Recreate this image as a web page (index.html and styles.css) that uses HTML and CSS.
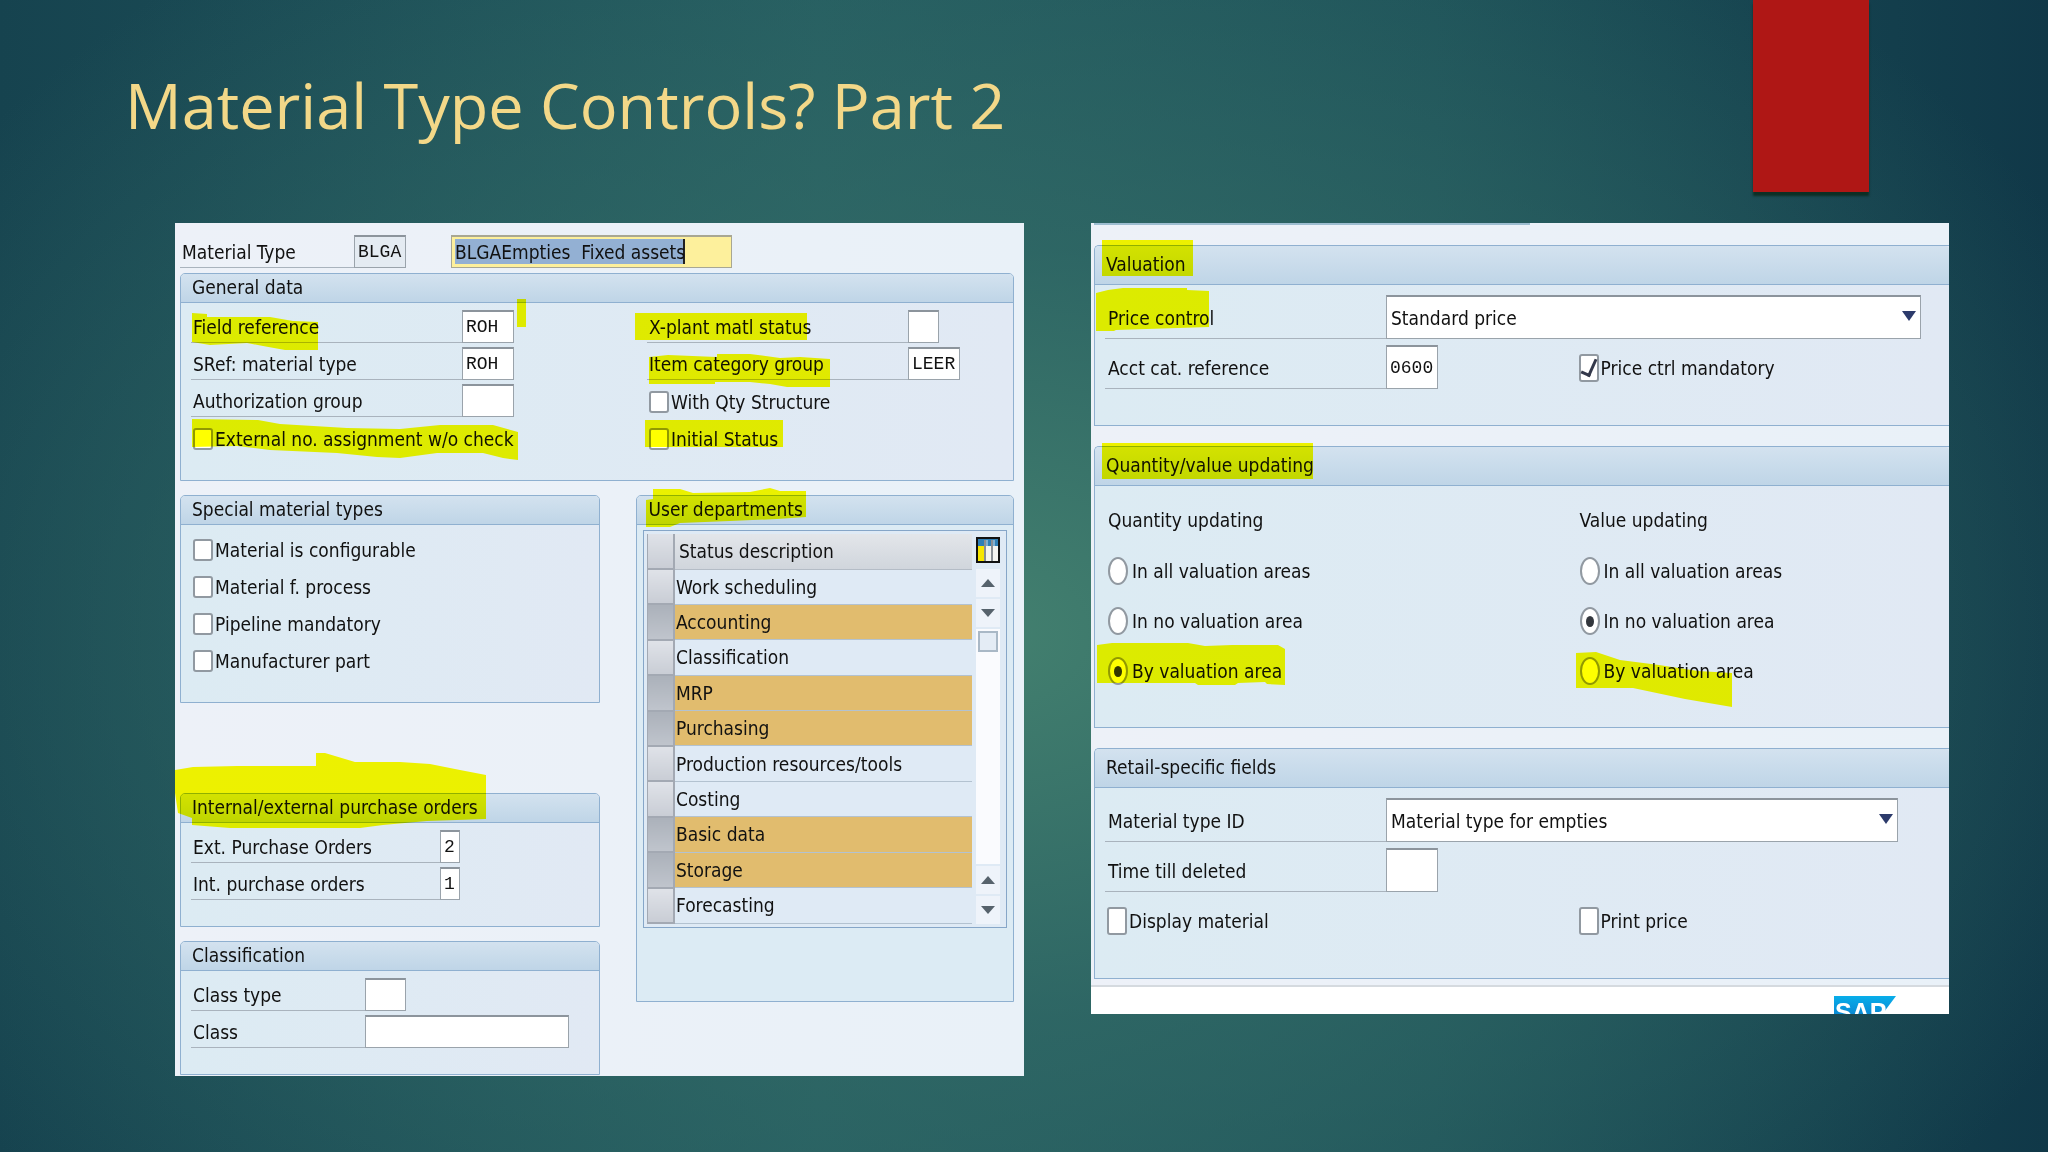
FILE: index.html
```html
<!DOCTYPE html>
<html lang="en">
<head>
    <meta charset="UTF-8">
    <meta name="viewport" content="width=device-width, initial-scale=1.0">
    <link rel="stylesheet" href="styles.css">
    <title>Material Type Controls? Part 2</title>
</head>
<body>
    <div class="ribbon"></div>
    <h1 class="title">Material Type Controls? Part 2</h1>

    <main class="panels">
        <form class="panel">
            <div class="top-row">
                <label class="caption" for="mtype">Material Type</label>
                <input class="box w4 readonly" id="mtype" value="BLGA" readonly>
                <input class="box descr" aria-label="Description" value="BLGAEmpties  Fixed assets">
            </div>

            <section class="group">
                <h2 class="group-title">General data</h2>
                <div class="group-body general">
                    <div class="rows">
                        <div class="row"><label class="caption" for="fref">Field reference</label><input class="box w4" id="fref" value="ROH"></div>
                        <div class="row"><label class="caption" for="sref">SRef: material type</label><input class="box w4" id="sref" value="ROH"></div>
                        <div class="row"><label class="caption" for="auth">Authorization group</label><input class="box w4" id="auth"></div>
                        <label class="row tick"><input type="checkbox">External no. assignment w/o check</label>
                    </div>
                    <div class="rows">
                        <div class="row"><label class="caption" for="xplant">X-plant matl status</label><input class="box w2" id="xplant"></div>
                        <div class="row"><label class="caption" for="itemcat">Item category group</label><input class="box w4" id="itemcat" value="LEER"></div>
                        <label class="row tick"><input type="checkbox">With Qty Structure</label>
                        <label class="row tick"><input type="checkbox">Initial Status</label>
                    </div>
                </div>
            </section>

            <div class="columns">
                <div class="column">
                    <section class="group special">
                        <h2 class="group-title">Special material types</h2>
                        <div class="group-body rows">
                            <label class="row tick"><input type="checkbox">Material is configurable</label>
                            <label class="row tick"><input type="checkbox">Material f. process</label>
                            <label class="row tick"><input type="checkbox">Pipeline mandatory</label>
                            <label class="row tick"><input type="checkbox">Manufacturer part</label>
                        </div>
                    </section>

                    <section class="group">
                        <h2 class="group-title">Internal/external purchase orders</h2>
                        <div class="group-body rows orders">
                            <div class="row"><label class="caption" for="ext">Ext. Purchase Orders</label><input class="box w1" id="ext" value="2"></div>
                            <div class="row"><label class="caption" for="int">Int. purchase orders</label><input class="box w1" id="int" value="1"></div>
                        </div>
                    </section>

                    <section class="group">
                        <h2 class="group-title">Classification</h2>
                        <div class="group-body rows classes">
                            <div class="row"><label class="caption" for="ctype">Class type</label><input class="box w3" id="ctype"></div>
                            <div class="row"><label class="caption" for="class">Class</label><input class="box w18" id="class"></div>
                        </div>
                    </section>
                </div>

                <section class="group departments">
                    <h2 class="group-title">User departments</h2>
                    <div class="list">
                        <table class="table">
                            <thead>
                                <tr><th class="sel"></th><th>Status description</th></tr>
                            </thead>
                            <tbody>
                                <tr><td class="sel"></td><td>Work scheduling</td></tr>
                                <tr class="on"><td class="sel"></td><td>Accounting</td></tr>
                                <tr><td class="sel"></td><td>Classification</td></tr>
                                <tr class="on"><td class="sel"></td><td>MRP</td></tr>
                                <tr class="on"><td class="sel"></td><td>Purchasing</td></tr>
                                <tr><td class="sel"></td><td>Production resources/tools</td></tr>
                                <tr><td class="sel"></td><td>Costing</td></tr>
                                <tr class="on"><td class="sel"></td><td>Basic data</td></tr>
                                <tr class="on"><td class="sel"></td><td>Storage</td></tr>
                                <tr><td class="sel"></td><td>Forecasting</td></tr>
                            </tbody>
                        </table>
                        <div class="scroll">
                            <button class="config" type="button" aria-label="Configure columns">
                                <svg width="24" height="26" viewBox="0 0 24 26">
                                    <rect x="1" y="1" width="22" height="24" fill="#f4f4f0" stroke="#111" stroke-width="2"/>
                                    <rect x="2" y="2" width="20" height="7" fill="#2f7fb5"/>
                                    <rect x="2" y="9" width="6" height="15" fill="#f7e600"/>
                                    <path d="M9 3v21M16 3v21" stroke="#8a8f94" stroke-width="2"/>
                                    <path d="M11 3v6M18 3v6" stroke="#cfe0ec" stroke-width="1"/>
                                </svg>
                            </button>
                            <button class="arrow up" type="button" aria-label="Scroll up"></button>
                            <button class="arrow down" type="button" aria-label="Scroll down"></button>
                            <div class="track"><div class="thumb"></div></div>
                            <button class="arrow up" type="button" aria-label="Page up"></button>
                            <button class="arrow down" type="button" aria-label="Page down"></button>
                        </div>
                    </div>
                </section>
            </div>

            <!-- marker strokes -->
            <svg class="marker" viewBox="0 0 849 853" preserveAspectRatio="none">
                <polygon points="17,90 32,91 32,94 95,94 118,98 143,99 143,127 110,127 88,123 72,120 35,122 17,119"/>
                <polygon points="342,76 351,76 351,104 342,104"/>
                <polygon points="17,196 83,197 105,201 172,205 225,206 265,202 318,202 343,209 343,237 328,235 308,230 262,230 225,235 202,234 162,230 95,227 62,223 17,224"/>
                <polygon points="460,90 632,90 632,117 460,117"/>
                <polygon points="474,134 493,132 542,134 542,131 575,131 605,135 625,134 655,136 655,164 612,164 595,161 575,159 540,159 540,161 474,161"/>
                <polygon points="470,197 608,197 608,224 470,224"/>
                <polygon points="478,266 505,266 518,270 575,269 595,265 605,268 631,268 631,294 602,296 555,298 505,300 495,304 471,304 471,277 478,276"/>
                <polygon points="0,547 18,544 62,543 141,543 141,530 150,530 180,539 225,539 255,541 285,547 311,552 311,596 252,598 208,602 185,605 55,605 17,602 17,595 3,590 0,570"/>
            </svg>
        </form>

        <form class="panel tall">
            <div class="tab-line"></div>

            <section class="group">
                <h2 class="group-title">Valuation</h2>
                <div class="group-body rows">
                    <div class="row"><label class="caption" for="price">Price control</label>
                        <div class="combo"><select id="price"><option>Standard price</option></select></div>
                    </div>
                    <div class="halves">
                        <div class="row"><label class="caption" for="acct">Acct cat. reference</label><input class="box w4" id="acct" value="0600"></div>
                        <label class="row tick"><input type="checkbox" checked>Price ctrl mandatory</label>
                    </div>
                </div>
            </section>

            <section class="group updating">
                <h2 class="group-title">Quantity/value updating</h2>
                <div class="group-body halves">
                    <div class="rows" role="radiogroup" aria-labelledby="qty">
                        <div class="row plain" id="qty">Quantity updating</div>
                        <label class="row tick"><input type="radio" name="qty">In all valuation areas</label>
                        <label class="row tick"><input type="radio" name="qty">In no valuation area</label>
                        <label class="row tick"><input type="radio" name="qty" checked>By valuation area</label>
                    </div>
                    <div class="rows" role="radiogroup" aria-labelledby="val">
                        <div class="row plain" id="val">Value updating</div>
                        <label class="row tick"><input type="radio" name="val">In all valuation areas</label>
                        <label class="row tick"><input type="radio" name="val" checked>In no valuation area</label>
                        <label class="row tick"><input type="radio" name="val">By valuation area</label>
                    </div>
                </div>
            </section>

            <section class="group">
                <h2 class="group-title">Retail-specific fields</h2>
                <div class="group-body rows">
                    <div class="row"><label class="caption" for="mtid">Material type ID</label>
                        <div class="combo short"><select id="mtid"><option>Material type for empties</option></select></div>
                    </div>
                    <div class="row"><label class="caption" for="time">Time till deleted</label><input class="box w4" id="time"></div>
                    <div class="halves">
                        <label class="row tick"><input type="checkbox">Display material</label>
                        <label class="row tick"><input type="checkbox">Print price</label>
                    </div>
                </div>
            </section>

            <footer class="footer">
                <svg class="sap" width="62" height="32" viewBox="0 0 62 32" role="img" aria-label="SAP">
                    <defs>
                        <linearGradient id="blue" x1="0" y1="0" x2="0" y2="1">
                            <stop offset="0" stop-color="#08aeea"/>
                            <stop offset="1" stop-color="#0a6fc4"/>
                        </linearGradient>
                    </defs>
                    <path d="M0 0h62L38 32H0z" fill="url(#blue)"/>
                    <text x="1" y="25" class="sap-text">SAP</text>
                </svg>
            </footer>

            <svg class="marker" viewBox="0 0 858 791" preserveAspectRatio="none">
                <polygon points="11,17 102,17 102,53 11,53"/>
                <polygon points="5,70 17,67 32,65 96,65 96,67 118,68 118,104 25,107 23,108 5,108"/>
                <polygon points="11,220 222,220 222,256 11,256"/>
                <polygon points="6,422 21,420 97,420 114,423 141,422 187,422 194,426 194,462 176,461 174,459 147,460 144,462 107,462 104,460 6,460"/>
                <polygon points="485,430 505,429 529,437 568,442 607,448 641,450 641,484 594,476 542,465 485,465"/>
            </svg>
        </form>
    </main>
</body>
</html>
```

FILE: styles.css
```css
* {
    box-sizing: border-box;
}

body {
    margin: 0;
    min-height: 100vh;
    font-family: "DejaVu Sans Condensed", "DejaVu Sans", sans-serif;
    font-size: 19px;
    color: #111;
    background:
        radial-gradient(ellipse 60% 75% at 48% 55%, #43806f 0%, rgba(51, 108, 103, 0.7) 45%, rgba(30, 80, 87, 0) 100%),
        linear-gradient(90deg, #16434f 0%, #235b60 40%, #1c5058 70%, #103848 100%);
}

.ribbon {
    position: absolute;
    top: 0;
    right: 179px;
    width: 116px;
    height: 192px;
    background-color: #af1715;
    box-shadow: 0 4px 2px rgba(10, 40, 25, 0.8);
}

.title {
    margin: 0;
    padding: 60px 300px 73px 125px;
    font-family: "Open Sans", "Noto Sans", sans-serif;
    font-size: 63px;
    font-weight: 400;
    line-height: 90px;
    color: #f3d888;
}

.panels {
    display: grid;
    grid-template-columns: 849fr 858fr;
    align-items: start;
    gap: 67px;
    padding: 0 99px 76px 175px;
}

.panel {
    position: relative;
    padding: 12px 10px 1px 5px;
    background: linear-gradient(90deg, #edf1f8, #e9f1f8);
    overflow: hidden;
}

.marker {
    position: absolute;
    top: 0;
    left: 0;
    width: 100%;
    height: 100%;
    fill: #ff0;
    mix-blend-mode: multiply;
    pointer-events: none;
}

.top-row {
    display: flex;
    height: 33px;
    margin-bottom: 5px;
}

.top-row .caption {
    width: 174px;
}

/* groups */
.group {
    border: 1px solid #8fb0d0;
    border-radius: 5px 5px 0 0;
    background: linear-gradient(90deg, #dcebf3, #e1e9f4);
}

.group-title {
    margin: 0;
    padding-left: 11px;
    height: 29px;
    border-bottom: 1px solid #8fb0d0;
    border-radius: 4px 4px 0 0;
    background: linear-gradient(#d3e2ef, #bfd5e7);
    font-size: 19px;
    font-weight: 400;
    line-height: 27px;
}

.group-body {
    padding: 7px 10px 26px;
}

.general {
    display: grid;
    grid-template-columns: 456fr 356fr;
}

.rows {
    display: flex;
    flex-direction: column;
    gap: 4px;
}

.row {
    display: flex;
    height: 33px;
}

.caption {
    width: 271px;
    padding-left: 2px;
    border-bottom: 1px solid #a9b3bd;
    line-height: 35px;
}

.general .rows + .rows .caption {
    width: 261px;
}

.orders .caption {
    width: 249px;
}

.classes .caption {
    width: 174px;
}

.box {
    height: 33px;
    padding: 0 3px;
    border: 1px solid #9aa3ab;
    border-top: 2px solid #8c949c;
    border-radius: 0;
    background-color: #fff;
    font-family: "Liberation Mono", monospace;
    font-size: 18px;
    color: #111;
    outline: none;
}

.w1 { width: 20px; }
.w2 { width: 31px; }
.w3 { width: 41px; }
.w4 { width: 52px; }
.w18 { width: 204px; }

.readonly {
    background-color: #e4ebf2;
}

.descr {
    width: 281px;
    margin-left: 45px;
    font-family: inherit;
    font-size: 19px;
    border-color: #a8a793;
    background: linear-gradient(90deg, #93b0d3 228px, #222 228px) 3px 2px / 230px 25px no-repeat #fdf09c;
}

.tick {
    align-items: center;
    gap: 2px;
    padding: 2px 0 0 2px;
}

.tick input {
    appearance: none;
    margin: 0;
    width: 20px;
    height: 22px;
    border: 2px solid #9199a1;
    border-radius: 3px;
    background-color: #fff;
}

.columns {
    display: grid;
    grid-template-columns: 421fr 378fr;
    align-items: start;
    gap: 36px;
    margin-top: 14px;
}

.column {
    display: flex;
    flex-direction: column;
    gap: 14px;
}

.special {
    margin-bottom: 76px;
}

/* user departments */
.departments {
    padding-bottom: 73px;
    background: #dcebf4;
}

.list {
    display: flex;
    margin: 5px 6px 0;
    padding: 3px;
    border: 1px solid #86a6c8;
    background-color: #dfeaf5;
}

.table {
    flex: 1;
    height: 390px;
    border-collapse: collapse;
}

.table th {
    height: 35px;
    padding: 0 0 0 4px;
    border-bottom: 1px solid #b4bcc6;
    background: linear-gradient(#e3e6ea, #d0d5dc);
    font-weight: 400;
    text-align: left;
}

.table td {
    padding: 0 0 0 1px;
    border-bottom: 1px solid #b3c2d0;
}

.table .sel {
    width: 26px;
    border: 2px solid #a3a9b3;
    border-width: 0 2px 2px 1px;
    background: linear-gradient(#dfe2e8, #c9cdd5);
}

.on td {
    background-color: #e1bc6e;
}

.table .on .sel {
    background: linear-gradient(#abb1ba, #bfc4cc);
}

.scroll {
    display: flex;
    flex-direction: column;
    align-items: center;
    width: 31px;
    gap: 2px;
}

.config {
    display: flex;
    margin: 3px 0 4px;
    padding: 0;
    border: 0;
    background: none;
}

.arrow {
    display: grid;
    place-items: center;
    width: 24px;
    height: 28px;
    padding: 0;
    border: 0;
    background-color: #eef3fa;
}

.arrow::before {
    content: "";
    border: 7px solid transparent;
}

.up::before {
    border-top: 0;
    border-bottom: 8px solid #56626c;
}

.down::before {
    border-bottom: 0;
    border-top: 8px solid #56626c;
}

.track {
    flex: 1;
    width: 24px;
    background-color: #fafbfe;
}

.thumb {
    height: 21px;
    margin: 2px 2px 0;
    border: 2px solid #a9b8c6;
    background-color: #e4ecf5;
}

/* second panel, taller rows */
.tall {
    padding: 0 0 0 3px;
}

.tab-line {
    width: 51%;
    height: 2px;
    margin-bottom: 20px;
    background-color: #9dbdd0;
}

.tall .group {
    margin-bottom: 20px;
    border-right: 0;
    border-radius: 5px 0 0 0;
}

.tall .group:last-of-type {
    margin-bottom: 6px;
}

.tall .group-title {
    height: 39px;
    line-height: 36px;
}

.tall .group-body {
    padding: 10px 0 36px 10px;
}

.tall .updating .group-body {
    padding: 12px 0 35px 10px;
}

.tall .rows {
    gap: 6px;
}

.tall .row,
.tall .box {
    height: 44px;
}

.tall .caption {
    width: 281px;
    padding-left: 3px;
    line-height: 46px;
}

.tall .plain {
    padding-left: 3px;
    line-height: 44px;
}

.halves {
    display: grid;
    grid-template-columns: 471fr 372fr;
}

.tall .tick input {
    height: 28px;
}

.tall .tick input[type="radio"] {
    margin: 0 2px 0 1px;
    border-radius: 50%;
}

.tall .tick input:checked {
    display: grid;
    place-items: center;
}

.tick input[type="radio"]:checked::before {
    content: "";
    width: 8px;
    height: 11px;
    border-radius: 50%;
    background-color: #33373d;
}

.tick input[type="checkbox"]:checked::before {
    content: "";
    width: 7px;
    height: 16px;
    margin-bottom: 3px;
    border: solid #33384a;
    border-width: 0 3px 3px 0;
    transform: rotate(24deg);
}

.combo {
    position: relative;
    flex: 1;
    margin-right: 28px;
}

.combo.short {
    margin-right: 51px;
}

.combo select {
    appearance: none;
    width: 100%;
    height: 44px;
    padding: 0 4px;
    border: 1px solid #9aa3ab;
    border-top: 2px solid #8c949c;
    border-radius: 0;
    background-color: #fff;
    font: inherit;
    color: #111;
}

.combo::after {
    content: "";
    position: absolute;
    top: 16px;
    right: 5px;
    border: 7px solid transparent;
    border-top: 10px solid #2c3a6b;
    border-bottom: 0;
}

.footer {
    display: flex;
    height: 29px;
    margin-left: -3px;
    padding: 9px 53px 0 0;
    justify-content: flex-end;
    border-top: 2px solid #d5dadf;
    background-color: #fff;
}

.sap {
    flex: none;
}

.sap-text {
    font-family: "Liberation Sans", sans-serif;
    font-size: 25px;
    font-weight: 700;
    fill: #fff;
}
```
